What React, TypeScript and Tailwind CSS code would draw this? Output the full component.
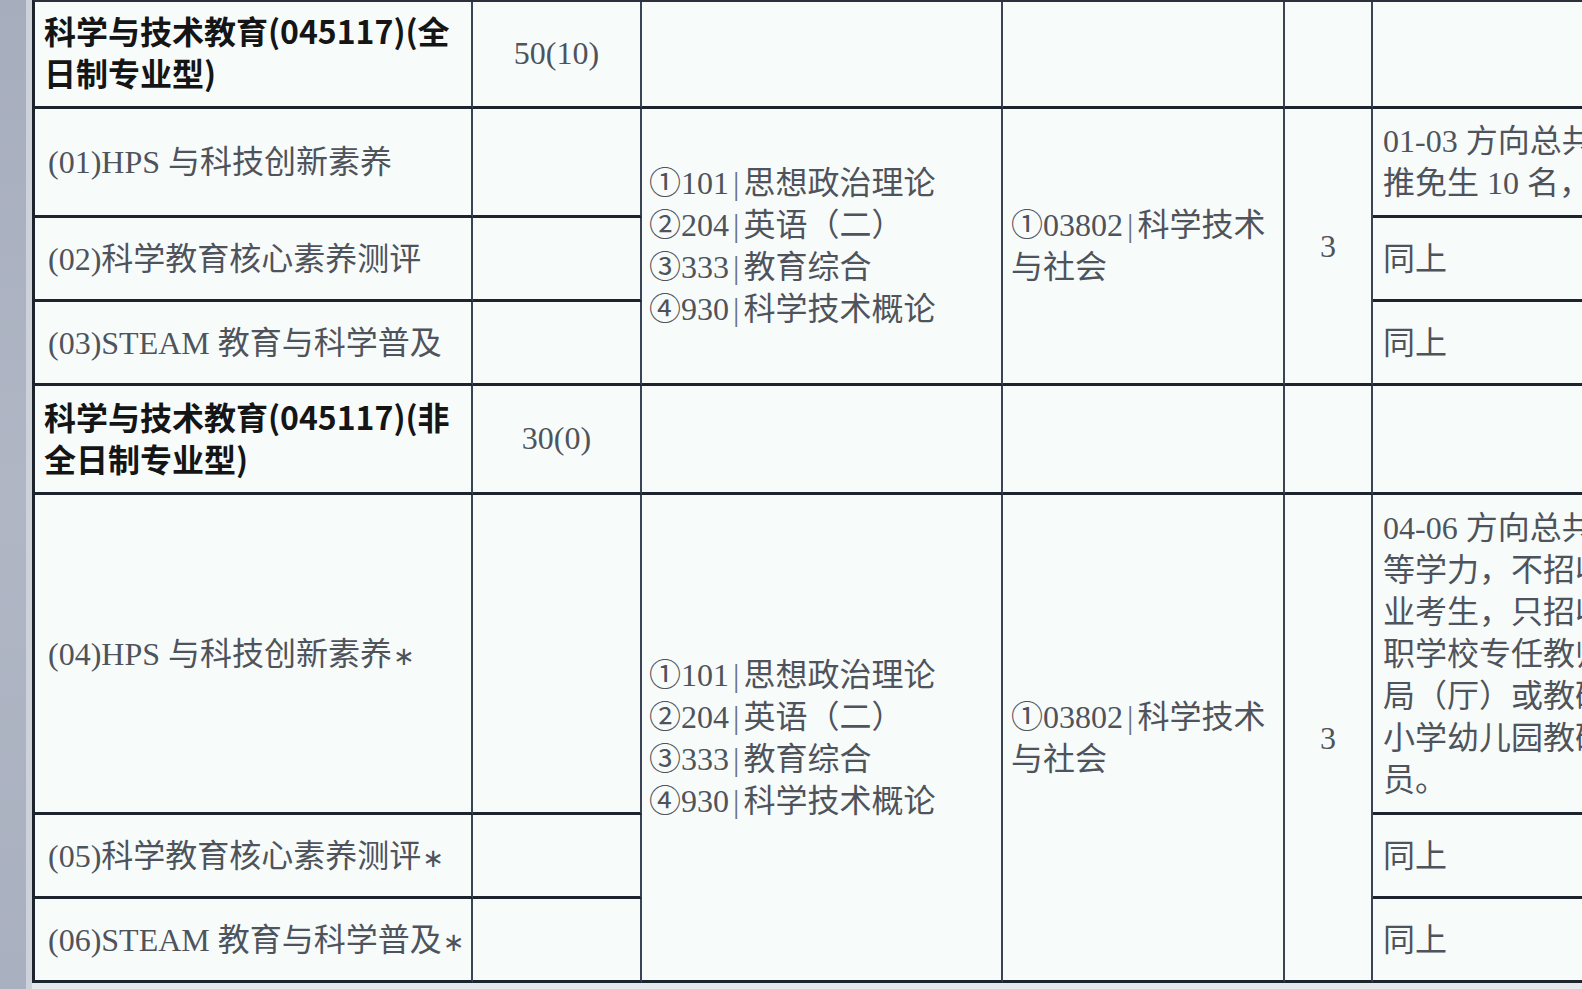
import type { ReactNode } from "react";

const serif = "font-['Liberation_Serif','Noto_Sans_CJK_SC',serif] text-[32px] text-[#4f535b]";
const bold = "font-['Noto_Sans_CJK_SC',sans-serif] font-bold text-[32px] text-[#151515]";
const cellBase =
  "bg-[#f7fcfb] border-solid border-r-2 border-b-[3px] border-r-[#3a4456] border-b-[#1d242e] flex items-center overflow-hidden";

function Cell({ className = "", children }: { className?: string; children?: ReactNode }) {
  return <div className={`${cellBase} ${className}`}>{children}</div>;
}

function Star() {
  return <span className="font-['DejaVu_Sans',sans-serif] text-[26px] ml-[1px]">∗</span>;
}

function Bar() {
  return <span className="text-[#6b7080] mx-[4px]">|</span>;
}

const subjects = ["①101|思想政治理论", "②204|英语（二）", "③333|教育综合", "④930|科学技术概论"];

function Subjects() {
  return (
    <div className={`${serif} leading-[42px] whitespace-nowrap`}>
      {subjects.map((s) => {
        const [code, name] = s.split("|");
        return (
          <div key={s}>
            {code}
            <Bar />
            {name}
          </div>
        );
      })}
    </div>
  );
}

function Retest() {
  return (
    <div className={`${serif} leading-[42px] whitespace-nowrap`}>
      <div>
        ①03802<Bar />科学技术
      </div>
      <div>与社会</div>
    </div>
  );
}

const noteA = ["01-03 方向总共招生 50 名，含", "推免生 10 名，其余统考招生。"];
const noteB = [
  "04-06 方向总共招生 30 名，招收同",
  "等学力，不招收应届本科毕",
  "业考生，只招收在职中小学、中",
  "职学校专任教师，以及教育",
  "局（厅）或教研室的中",
  "小学幼儿园教研",
  "员。",
];

function Note({ lines }: { lines: string[] }) {
  return (
    <div className={`${serif} leading-[42px] whitespace-nowrap pl-[10px]`}>
      {lines.map((l) => (
        <div key={l}>{l}</div>
      ))}
    </div>
  );
}

export default function App() {
  return (
    <div className="w-[1582px] h-[989px] overflow-hidden flex bg-[#e5e9ed]">
      {/* left page edge */}
      <div className="w-[26px] h-full shrink-0 bg-gradient-to-b from-[#a6adbd] via-[#b0b6c4] to-[#a9b0bf]" />
      <div className="w-[6px] h-full shrink-0 bg-[#cdd2da]" />

      <div className="flex flex-col shrink-0">
        <div className="grid grid-cols-[438px_169px_361px_282px_88px_327px] grid-rows-[107px_109px_84px_84px_109px_320px_84px_84px] border-solid border-l-[3px] border-t-2 border-l-[#1d242e] border-t-[#2a313c]">
          {/* 全日制 header */}
          <Cell className="pl-[9px] pb-[6px]">
            <div className={`${bold} leading-[42px] whitespace-nowrap`}>
              <div>科学与技术教育(045117)(全</div>
              <div>日制专业型)</div>
            </div>
          </Cell>
          <Cell className="justify-center pb-[3px]">
            <span className={serif}>50(10)</span>
          </Cell>
          <Cell />
          <Cell />
          <Cell />
          <Cell />

          {/* 01 */}
          <Cell className="pl-[13px]">
            <span className={`${serif} whitespace-nowrap`}>(01)HPS 与科技创新素养</span>
          </Cell>
          <Cell />
          <Cell className="row-span-3 pl-[7px]">
            <Subjects />
          </Cell>
          <Cell className="row-span-3 pl-[8px]">
            <Retest />
          </Cell>
          <Cell className="row-span-3 justify-center">
            <span className={serif}>3</span>
          </Cell>
          <Cell>
            <Note lines={noteA} />
          </Cell>

          {/* 02 */}
          <Cell className="pl-[13px]">
            <span className={`${serif} whitespace-nowrap`}>(02)科学教育核心素养测评</span>
          </Cell>
          <Cell />
          <Cell>
            <Note lines={["同上"]} />
          </Cell>

          {/* 03 */}
          <Cell className="pl-[13px]">
            <span className={`${serif} whitespace-nowrap`}>(03)STEAM 教育与科学普及</span>
          </Cell>
          <Cell />
          <Cell>
            <Note lines={["同上"]} />
          </Cell>

          {/* 非全日制 header */}
          <Cell className="pl-[9px] pb-[4px]">
            <div className={`${bold} leading-[42px] whitespace-nowrap`}>
              <div>科学与技术教育(045117)(非</div>
              <div>全日制专业型)</div>
            </div>
          </Cell>
          <Cell className="justify-center pb-[3px]">
            <span className={serif}>30(0)</span>
          </Cell>
          <Cell />
          <Cell />
          <Cell />
          <Cell />

          {/* 04 */}
          <Cell className="pl-[13px]">
            <span className={`${serif} whitespace-nowrap`}>
              (04)HPS 与科技创新素养<Star />
            </span>
          </Cell>
          <Cell />
          <Cell className="row-span-3 pl-[7px]">
            <Subjects />
          </Cell>
          <Cell className="row-span-3 pl-[8px]">
            <Retest />
          </Cell>
          <Cell className="row-span-3 justify-center">
            <span className={serif}>3</span>
          </Cell>
          <Cell>
            <Note lines={noteB} />
          </Cell>

          {/* 05 */}
          <Cell className="pl-[13px]">
            <span className={`${serif} whitespace-nowrap`}>
              (05)科学教育核心素养测评<Star />
            </span>
          </Cell>
          <Cell />
          <Cell>
            <Note lines={["同上"]} />
          </Cell>

          {/* 06 */}
          <Cell className="pl-[13px]">
            <span className={`${serif} whitespace-nowrap`}>
              (06)STEAM 教育与科学普及<Star />
            </span>
          </Cell>
          <Cell />
          <Cell>
            <Note lines={["同上"]} />
          </Cell>
        </div>
      </div>
    </div>
  );
}
